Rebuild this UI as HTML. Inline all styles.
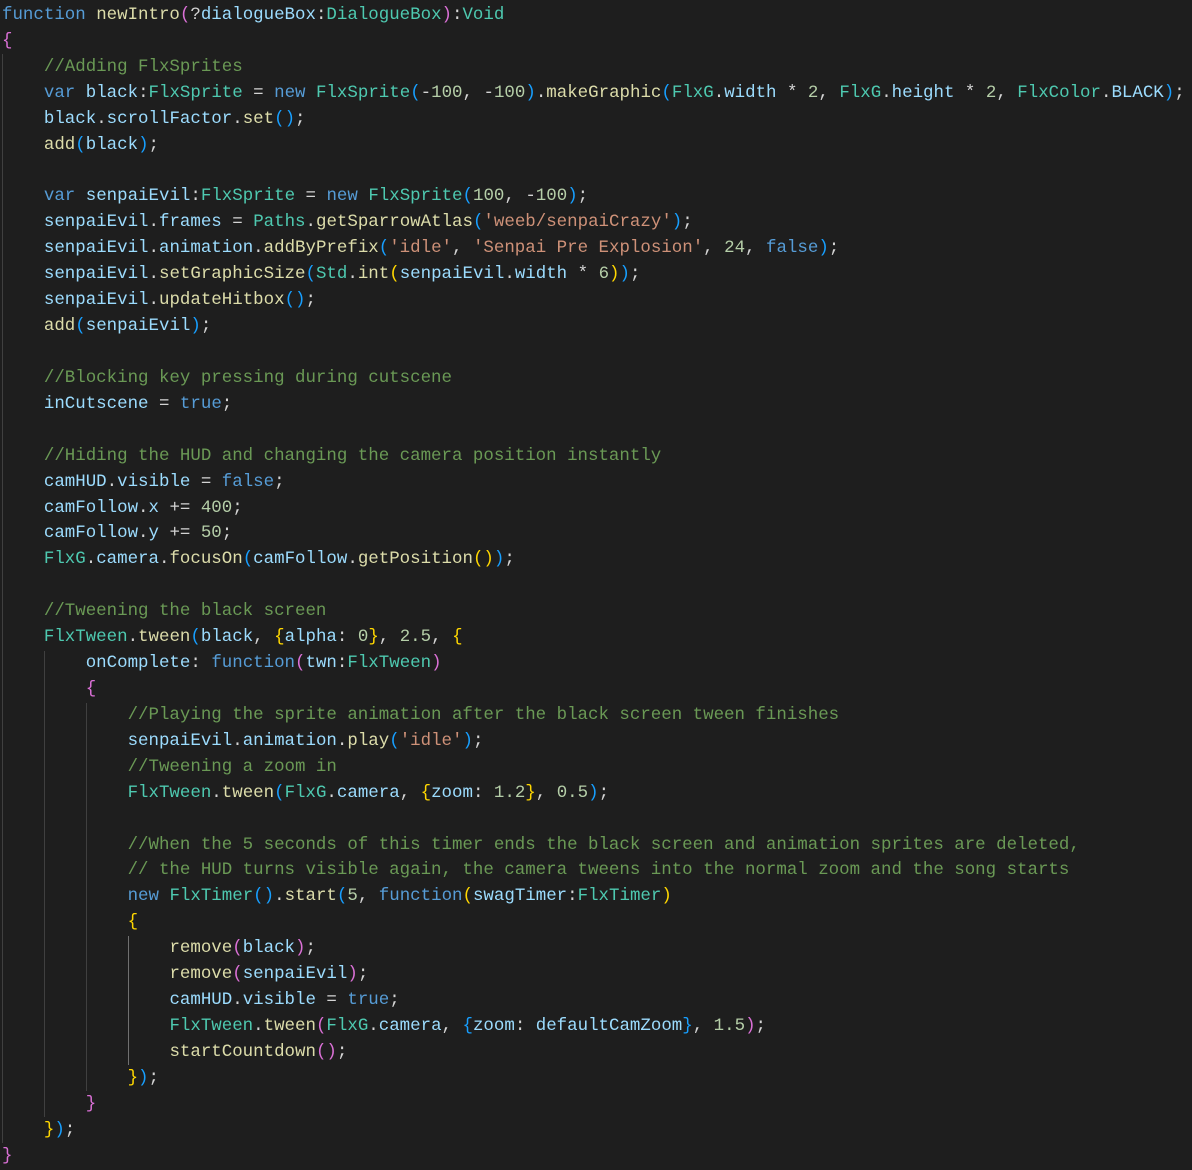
<!DOCTYPE html>
<html><head><meta charset="utf-8"><style>
html,body{margin:0;padding:0;background:#1e1e1e;width:1192px;height:1168px;overflow:hidden}
#c{position:absolute;left:2px;top:3px;font-family:"Liberation Mono",monospace;font-size:17.45px;line-height:25.93px;color:#d4d4d4}
.l{height:25.93px;white-space:pre}
.k{color:#569cd6}.f{color:#dcdcaa}.t{color:#4ec9b0}.v{color:#9cdcfe}.c{color:#6a9955}.s{color:#ce9178}.n{color:#b5cea8}
.g{color:#ffd700}.p{color:#da70d6}.b{color:#179fff}
.gd{position:absolute;width:1px;background:#404040}
</style></head><body>
<div class="gd" style="left:2px;top:54px;height:1089px"></div>
<div class="gd" style="left:44px;top:651px;height:466px"></div>
<div class="gd" style="left:86px;top:703px;height:388px"></div>
<div class="gd" style="left:128px;top:936px;height:129px;background:#707070"></div>
<div id="c">
<div class="l"><span class="k">function</span> <span class="f">newIntro</span><span class="p">(</span>?<span class="v">dialogueBox</span>:<span class="t">DialogueBox</span><span class="p">)</span>:<span class="t">Void</span></div>
<div class="l"><span class="p">{</span></div>
<div class="l">    <span class="c">//Adding FlxSprites</span></div>
<div class="l">    <span class="k">var</span> <span class="v">black</span>:<span class="t">FlxSprite</span> = <span class="k">new</span> <span class="t">FlxSprite</span><span class="b">(</span>-<span class="n">100</span>, -<span class="n">100</span><span class="b">)</span>.<span class="f">makeGraphic</span><span class="b">(</span><span class="t">FlxG</span>.<span class="v">width</span> * <span class="n">2</span>, <span class="t">FlxG</span>.<span class="v">height</span> * <span class="n">2</span>, <span class="t">FlxColor</span>.<span class="v">BLACK</span><span class="b">)</span>;</div>
<div class="l">    <span class="v">black</span>.<span class="v">scrollFactor</span>.<span class="f">set</span><span class="b">()</span>;</div>
<div class="l">    <span class="f">add</span><span class="b">(</span><span class="v">black</span><span class="b">)</span>;</div>
<div class="l"> </div>
<div class="l">    <span class="k">var</span> <span class="v">senpaiEvil</span>:<span class="t">FlxSprite</span> = <span class="k">new</span> <span class="t">FlxSprite</span><span class="b">(</span><span class="n">100</span>, -<span class="n">100</span><span class="b">)</span>;</div>
<div class="l">    <span class="v">senpaiEvil</span>.<span class="v">frames</span> = <span class="t">Paths</span>.<span class="f">getSparrowAtlas</span><span class="b">(</span><span class="s">'weeb/senpaiCrazy'</span><span class="b">)</span>;</div>
<div class="l">    <span class="v">senpaiEvil</span>.<span class="v">animation</span>.<span class="f">addByPrefix</span><span class="b">(</span><span class="s">'idle'</span>, <span class="s">'Senpai Pre Explosion'</span>, <span class="n">24</span>, <span class="k">false</span><span class="b">)</span>;</div>
<div class="l">    <span class="v">senpaiEvil</span>.<span class="f">setGraphicSize</span><span class="b">(</span><span class="t">Std</span>.<span class="f">int</span><span class="g">(</span><span class="v">senpaiEvil</span>.<span class="v">width</span> * <span class="n">6</span><span class="g">)</span><span class="b">)</span>;</div>
<div class="l">    <span class="v">senpaiEvil</span>.<span class="f">updateHitbox</span><span class="b">()</span>;</div>
<div class="l">    <span class="f">add</span><span class="b">(</span><span class="v">senpaiEvil</span><span class="b">)</span>;</div>
<div class="l"> </div>
<div class="l">    <span class="c">//Blocking key pressing during cutscene</span></div>
<div class="l">    <span class="v">inCutscene</span> = <span class="k">true</span>;</div>
<div class="l"> </div>
<div class="l">    <span class="c">//Hiding the HUD and changing the camera position instantly</span></div>
<div class="l">    <span class="v">camHUD</span>.<span class="v">visible</span> = <span class="k">false</span>;</div>
<div class="l">    <span class="v">camFollow</span>.<span class="v">x</span> += <span class="n">400</span>;</div>
<div class="l">    <span class="v">camFollow</span>.<span class="v">y</span> += <span class="n">50</span>;</div>
<div class="l">    <span class="t">FlxG</span>.<span class="v">camera</span>.<span class="f">focusOn</span><span class="b">(</span><span class="v">camFollow</span>.<span class="f">getPosition</span><span class="g">()</span><span class="b">)</span>;</div>
<div class="l"> </div>
<div class="l">    <span class="c">//Tweening the black screen</span></div>
<div class="l">    <span class="t">FlxTween</span>.<span class="f">tween</span><span class="b">(</span><span class="v">black</span>, <span class="g">{</span><span class="v">alpha</span>: <span class="n">0</span><span class="g">}</span>, <span class="n">2.5</span>, <span class="g">{</span></div>
<div class="l">        <span class="v">onComplete</span>: <span class="k">function</span><span class="p">(</span><span class="v">twn</span>:<span class="t">FlxTween</span><span class="p">)</span></div>
<div class="l">        <span class="p">{</span></div>
<div class="l">            <span class="c">//Playing the sprite animation after the black screen tween finishes</span></div>
<div class="l">            <span class="v">senpaiEvil</span>.<span class="v">animation</span>.<span class="f">play</span><span class="b">(</span><span class="s">'idle'</span><span class="b">)</span>;</div>
<div class="l">            <span class="c">//Tweening a zoom in</span></div>
<div class="l">            <span class="t">FlxTween</span>.<span class="f">tween</span><span class="b">(</span><span class="t">FlxG</span>.<span class="v">camera</span>, <span class="g">{</span><span class="v">zoom</span>: <span class="n">1.2</span><span class="g">}</span>, <span class="n">0.5</span><span class="b">)</span>;</div>
<div class="l"> </div>
<div class="l">            <span class="c">//When the 5 seconds of this timer ends the black screen and animation sprites are deleted,</span></div>
<div class="l">            <span class="c">// the HUD turns visible again, the camera tweens into the normal zoom and the song starts</span></div>
<div class="l">            <span class="k">new</span> <span class="t">FlxTimer</span><span class="b">()</span>.<span class="f">start</span><span class="b">(</span><span class="n">5</span>, <span class="k">function</span><span class="g">(</span><span class="v">swagTimer</span>:<span class="t">FlxTimer</span><span class="g">)</span></div>
<div class="l">            <span class="g">{</span></div>
<div class="l">                <span class="f">remove</span><span class="p">(</span><span class="v">black</span><span class="p">)</span>;</div>
<div class="l">                <span class="f">remove</span><span class="p">(</span><span class="v">senpaiEvil</span><span class="p">)</span>;</div>
<div class="l">                <span class="v">camHUD</span>.<span class="v">visible</span> = <span class="k">true</span>;</div>
<div class="l">                <span class="t">FlxTween</span>.<span class="f">tween</span><span class="p">(</span><span class="t">FlxG</span>.<span class="v">camera</span>, <span class="b">{</span><span class="v">zoom</span>: <span class="v">defaultCamZoom</span><span class="b">}</span>, <span class="n">1.5</span><span class="p">)</span>;</div>
<div class="l">                <span class="f">startCountdown</span><span class="p">()</span>;</div>
<div class="l">            <span class="g">}</span><span class="b">)</span>;</div>
<div class="l">        <span class="p">}</span></div>
<div class="l">    <span class="g">}</span><span class="b">)</span>;</div>
<div class="l"><span class="p">}</span></div>
</div>
</body></html>
